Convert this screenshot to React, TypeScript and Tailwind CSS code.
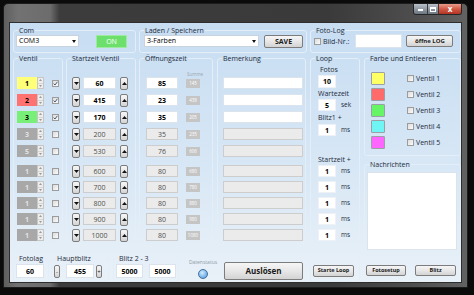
import React from 'react'

type Row = { n: string; color: string; on: boolean; start: string; open: string; sum: string }

const rows: Row[] = [
  { n: '1', color: 'bg-[#ffff78]', on: true, start: '60', open: '85', sum: '145' },
  { n: '2', color: 'bg-[#ff7272]', on: true, start: '415', open: '23', sum: '438' },
  { n: '3', color: 'bg-[#78f078]', on: true, start: '170', open: '35', sum: '205' },
  { n: '3', color: 'bg-[#a8a8a8]', on: false, start: '200', open: '35', sum: '235' },
  { n: '5', color: 'bg-[#a8a8a8]', on: false, start: '530', open: '76', sum: '606' },
  { n: '1', color: 'bg-[#a8a8a8]', on: false, start: '600', open: '80', sum: '680' },
  { n: '1', color: 'bg-[#a8a8a8]', on: false, start: '700', open: '80', sum: '780' },
  { n: '1', color: 'bg-[#a8a8a8]', on: false, start: '800', open: '80', sum: '880' },
  { n: '1', color: 'bg-[#a8a8a8]', on: false, start: '900', open: '80', sum: '980' },
  { n: '1', color: 'bg-[#a8a8a8]', on: false, start: '1000', open: '80', sum: '1080' },
]

const colors = [
  { c: 'bg-[#ffff66]', label: 'Ventil 1' },
  { c: 'bg-[#ff6a6a]', label: 'Ventil 2' },
  { c: 'bg-[#66f566]', label: 'Ventil 3' },
  { c: 'bg-[#70f5f5]', label: 'Ventil 4' },
  { c: 'bg-[#ff66ff]', label: 'Ventil 5' },
]

// spacing between valve rows: two blocks of five
const rowGap = (i: number) => (i === 0 ? '' : i === 5 ? 'mt-[8px]' : i < 5 ? 'mt-[5px]' : 'mt-[4px]')

function Group({ label, className = '', children }: { label: string; className?: string; children?: React.ReactNode }) {
  return (
    <fieldset className={`min-w-0 shrink-0 rounded-[3px] border border-[#e4eef8] ${className}`}>
      <legend className="ml-[4px] px-[1px] text-[7px] leading-[9px] text-[#1d2b3a]">{label}</legend>
      {children}
    </fieldset>
  )
}

function Check({ checked = false }: { checked?: boolean }) {
  return (
    <span className="flex h-[7px] w-[7px] shrink-0 items-center justify-center border border-[#9c9c9c] bg-gradient-to-br from-[#dcdcdc] to-[#fbfbfb]">
      {checked && (
        <svg width="5" height="5" viewBox="0 0 5 5">
          <path d="M0.6 2.6 L2 4 L4.4 0.8" fill="none" stroke="#4b5a6b" strokeWidth="1" />
        </svg>
      )}
    </span>
  )
}

function Field({ value = '', on = true, className = '' }: { value?: string; on?: boolean; className?: string }) {
  return (
    <div
      className={`flex shrink-0 items-center justify-center border text-[7px] leading-none ${
        on ? 'border-[#dbe3ec] bg-white font-bold text-black' : 'border-[#cdcdcd] bg-[#ebebeb] text-[#4e4e4e]'
      } ${className}`}
    >
      {value}
    </div>
  )
}

function Btn({ children, className = '' }: { children?: React.ReactNode; className?: string }) {
  return (
    <div
      className={`flex shrink-0 items-center justify-center rounded-[2px] border border-[#7c7c7c] bg-gradient-to-b from-[#f6f6f6] via-[#e7e7e7] to-[#d3d3d3] font-bold leading-none text-[#1a1a1a] ${className}`}
    >
      {children}
    </div>
  )
}

function Tri({ up = false }: { up?: boolean }) {
  return (
    <svg width="5" height="3" viewBox="0 0 5 3">
      <path d={up ? 'M0 3 L2.5 0 L5 3 Z' : 'M0 0 L5 0 L2.5 3 Z'} fill="#111" />
    </svg>
  )
}

function Spin() {
  return (
    <div className="flex h-[12px] w-[7px] shrink-0 flex-col border border-[#c6c6c6] bg-[#ededed]">
      <div className="flex flex-1 items-center justify-center border-b border-[#d6d6d6]">
        <svg width="3" height="2" viewBox="0 0 3 2">
          <path d="M0 2 L1.5 0 L3 2 Z" fill="#9a9a9a" />
        </svg>
      </div>
      <div className="flex flex-1 items-center justify-center">
        <svg width="3" height="2" viewBox="0 0 3 2">
          <path d="M0 0 L3 0 L1.5 2 Z" fill="#9a9a9a" />
        </svg>
      </div>
    </div>
  )
}

function Combo({ value, className = '' }: { value: string; className?: string }) {
  return (
    <div className={`flex h-[12px] shrink-0 items-center justify-between border border-[#c9d3de] bg-white pl-[2px] pr-[2px] text-[7px] text-black ${className}`}>
      <span>{value}</span>
      <svg width="4" height="3" viewBox="0 0 4 3">
        <path d="M0 0 L4 0 L2 3 Z" fill="#111" />
      </svg>
    </div>
  )
}

function Ms({ value, unit }: { value: string; unit?: string }) {
  return (
    <div className="flex items-center">
      <Field value={value} className="ml-[7px] h-[12px] w-[18px] border-[#eef2f6]" />
      {unit && <span className="ml-[5px] text-[6.5px] leading-none text-[#1d2b3a]">{unit}</span>}
    </div>
  )
}

export default function App() {
  return (
    <div className="h-[295px] w-[474px] overflow-hidden bg-[#0b0b0b] pl-[3px] pt-[3px] font-['Open_Sans',sans-serif]">
      <div className="flex h-[285px] w-[465px] flex-col rounded-t-[5px] border border-[#1c1c1c] bg-[linear-gradient(90deg,#5f5f5f_0%,#727272_3%,#6c6c6c_10%,#3c3c3c_12%,#3a3a3a_70%,#4d4d4d_88%,#626262_100%)]">
        {/* title bar */}
        <div className="flex h-[18px] shrink-0 items-start justify-end pr-[5px]">
          <div className="flex h-[11px] overflow-hidden rounded-b-[3px] border border-t-0 border-[#262626]">
            <div className="flex w-[13px] items-end justify-center bg-gradient-to-b from-[#b7bfc8] to-[#6d7781] pb-[3px]">
              <div className="h-[2px] w-[5px] bg-white" />
            </div>
            <div className="flex w-[11px] items-center justify-center border-l border-[#3a3a3a] bg-gradient-to-b from-[#b7bfc8] to-[#6d7781]">
              <div className="h-[5px] w-[6px] border border-t-2 border-white" />
            </div>
            <div className="flex w-[23px] items-center justify-center border-l border-[#3a3a3a] bg-gradient-to-b from-[#e99a8a] via-[#d25a46] to-[#b33222] text-[8px] font-bold leading-none text-white">
              x
            </div>
          </div>
        </div>

        {/* client area */}
        <div className="ml-[5px] flex h-[261px] w-[453px] shrink-0 flex-col border border-[#2e2e2e] bg-gradient-to-b from-[#c7ddf2] via-[#d6e6f5] to-[#e9f1f8] pl-[3px] pt-[3px]">
          {/* top row */}
          <div className="flex">
            <Group label="Com" className="h-[27px] w-[123px]">
              <div className="flex items-start">
                <Combo value="COM3" className="ml-[2px] w-[63px]" />
                <div className="ml-[17px] flex h-[13px] w-[31px] items-center justify-center border border-[#9eea9e] bg-[#6ddf6d] text-[7px] leading-none text-white">
                  ON
                </div>
              </div>
            </Group>
            <Group label="Laden / Speichern" className="ml-[3px] h-[27px] w-[168px]">
              <div className="flex items-start">
                <Combo value="3-Farben" className="ml-[4px] w-[115px]" />
                <Btn className="ml-[5px] h-[13px] w-[39px] text-[7px]">SAVE</Btn>
              </div>
            </Group>
            <Group label="Foto-Log" className="ml-[3px] h-[27px] w-[151px]">
              <div className="flex items-start">
                <div className="ml-[3px] mt-[3px]">
                  <Check />
                </div>
                <span className="ml-[2px] mt-[2px] text-[7px] leading-[9px] text-[#1d2b3a]">Bild-Nr.:</span>
                <div className="ml-[6px] -mt-[1px] h-[14px] w-[47px] shrink-0 border border-[#dbe3ec] bg-white" />
                <Btn className="ml-[4px] h-[12px] w-[47px] text-[6px]">öffne LOG</Btn>
              </div>
            </Group>
          </div>

          {/* main area */}
          <div className="mt-[1px] flex">
            {/* left block */}
            <div className="flex w-[293px] shrink-0 flex-col">
              <div className="flex">
                <Group label="Ventil" className="h-[196px] w-[50px]">
                  <div className="flex flex-col pt-[14px]">
                    {rows.map((r, i) => (
                      <div key={i} className={`flex h-[12px] items-center ${rowGap(i)}`}>
                        <div
                          className={`ml-[3px] flex h-[12px] w-[20px] shrink-0 items-center justify-center text-[7px] font-bold leading-none ${r.color} ${
                            r.on ? 'text-black' : 'text-[#e2e2e2]'
                          }`}
                        >
                          {r.n}
                        </div>
                        <Spin />
                        <div className="ml-[8px]">
                          <Check checked={r.on} />
                        </div>
                      </div>
                    ))}
                  </div>
                </Group>

                <Group label="Startzeit Ventil" className="ml-[3px] h-[196px] w-[70px]">
                  <div className="flex flex-col pt-[14px]">
                    {rows.map((r, i) => (
                      <div key={i} className={`flex h-[12px] items-center ${rowGap(i)}`}>
                        <Btn className="ml-[5px] h-[13px] w-[8px]">
                          <Tri />
                        </Btn>
                        <Field value={r.start} on={r.on} className="ml-[3px] h-[12px] w-[33px]" />
                        <Btn className="ml-[4px] h-[13px] w-[8px]">
                          <Tri up />
                        </Btn>
                      </div>
                    ))}
                  </div>
                </Group>

                <Group label="Öffnungszeit" className="ml-[3px] h-[196px] w-[74px]">
                  <div className="flex flex-col">
                    <div className="flex h-[14px] items-end pb-[1px] pl-[47px] text-[4.5px] leading-none text-[#9aa6b2]">
                      Summe
                    </div>
                    {rows.map((r, i) => (
                      <div key={i} className={`flex h-[12px] items-center ${rowGap(i)}`}>
                        <Field value={r.open} on={r.on} className="ml-[6px] h-[12px] w-[32px]" />
                        <div className="ml-[8px] flex h-[9px] w-[14px] shrink-0 items-center justify-center bg-[#c5c5c5] text-[4.5px] leading-none text-white">
                          {r.sum}
                        </div>
                      </div>
                    ))}
                  </div>
                </Group>

                <Group label="Bemerkung" className="ml-[4px] h-[196px] w-[89px]">
                  <div className="flex flex-col pt-[14px]">
                    {rows.map((r, i) => (
                      <div key={i} className={`flex h-[12px] items-center ${rowGap(i)}`}>
                        <Field on={r.on} className="ml-[5px] h-[12px] w-[80px]" />
                      </div>
                    ))}
                  </div>
                </Group>
              </div>

              {/* bottom row */}
              <div className="mt-[4px] flex items-start">
                <Group label="Fotolag" className="h-[28px] w-[36px]">
                  <Field value="60" className="ml-[2px] mt-[1px] h-[14px] w-[28px]" />
                </Group>
                <Group label="Hauptblitz" className="ml-[2px] h-[28px] w-[58px]">
                  <div className="flex items-start">
                    <Btn className="ml-[2px] mt-[2px] h-[13px] w-[6px] text-[6px] font-normal">-</Btn>
                    <Field value="455" className="ml-[6px] mt-[1px] h-[14px] w-[28px]" />
                    <Btn className="ml-[2px] mt-[2px] h-[13px] w-[6px] text-[6px] font-normal">+</Btn>
                  </div>
                </Group>
                <Group label="Blitz 2 - 3" className="ml-[4px] h-[28px] w-[66px]">
                  <div className="flex items-start">
                    <Field value="5000" className="ml-[2px] mt-[1px] h-[14px] w-[27px]" />
                    <Field value="5000" className="ml-[6px] mt-[1px] h-[14px] w-[27px]" />
                  </div>
                </Group>
                <div className="ml-[4px] flex w-[40px] shrink-0 flex-col items-center pt-[5px]">
                  <span className="text-[5px] leading-[6px] text-[#8d9aa8]">Datenstatus</span>
                  <div className="mt-[4px] h-[10px] w-[10px] rounded-full border border-[#3f6f9c] bg-[radial-gradient(circle_at_40%_35%,#d2ecff,#7ab6ea_60%,#5a94cc)]" />
                </div>
                <Btn className="ml-[1px] mt-[8px] h-[18px] w-[79px] text-[8px]">Auslösen</Btn>
              </div>
            </div>

            {/* loop column */}
            <Group label="Loop" className="ml-[4px] h-[228px] w-[50px]">
              <div className="flex flex-col text-[7px] leading-[9px] text-[#1d2b3a]">
                <span className="ml-[9px] mt-[2px]">Fotos</span>
                <Field value="10" className="ml-[7px] mt-[1px] h-[13px] w-[18px] border-[#eef2f6]" />
                <span className="ml-[7px] mt-[1px]">Wartezeit</span>
                <div className="mt-[1px]">
                  <Ms value="5" unit="sek" />
                </div>
                <span className="ml-[7px] mt-[2px]">Blitz1 +</span>
                <div className="mt-[2px]">
                  <Ms value="1" unit="ms" />
                </div>
                <span className="ml-[7px] mt-[19px]">Startzeit +</span>
                <div className="mt-[1px]">
                  <Ms value="1" unit="ms" />
                </div>
                <div className="mt-[4px]">
                  <Ms value="1" unit="ms" />
                </div>
                <div className="mt-[4px]">
                  <Ms value="1" unit="ms" />
                </div>
                <div className="mt-[4px]">
                  <Ms value="1" unit="ms" />
                </div>
                <div className="mt-[4px]">
                  <Ms value="1" unit="ms" />
                </div>
                <Btn className="ml-[2px] mt-[24px] h-[12px] w-[41px] text-[5.5px]">Starte Loop</Btn>
              </div>
            </Group>

            {/* right column */}
            <div className="ml-[4px] flex w-[97px] shrink-0 flex-col">
              <Group label="Farbe und Entleeren" className="h-[102px] w-[97px]">
                <div className="flex flex-col pt-[9px]">
                  {colors.map((c, i) => (
                    <div key={c.label} className={`flex h-[13px] items-center ${i > 0 ? 'mt-[3px]' : ''}`}>
                      <div className={`ml-[6px] h-[13px] w-[14px] shrink-0 rounded-[1px] border border-[#9aa0a6] ${c.c}`} />
                      <div className="ml-[22px]">
                        <Check />
                      </div>
                      <span className="ml-[2px] text-[7px] leading-none text-[#1d2b3a]">{c.label}</span>
                    </div>
                  ))}
                </div>
              </Group>
              <Group label="Nachrichten" className="mt-[4px] h-[96px] w-[97px]">
                <div className="ml-[2px] mt-[3px] h-[78px] w-[90px] border border-[#dbe3ec] bg-white" />
              </Group>
              <div className="mt-[9px] flex">
                <Btn className="ml-[2px] h-[11px] w-[40px] text-[5.5px]">Fotosetup</Btn>
                <Btn className="ml-[9px] h-[11px] w-[41px] text-[5.5px]">Blitz</Btn>
              </div>
            </div>
          </div>
        </div>
      </div>
    </div>
  )
}
